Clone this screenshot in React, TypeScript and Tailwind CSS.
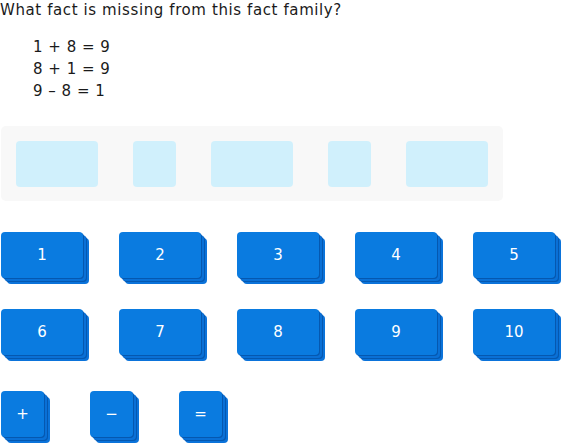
const numbers = ["1", "2", "3", "4", "5", "6", "7", "8", "9", "10"];
const operators = ["+", "\u2212", "="];
const slots = ["wide", "narrow", "wide", "narrow", "wide"];

function Tile({ label, wide }: { label: string; wide: boolean }) {
  return (
    <button
      className={`${wide ? "w-[82px]" : "w-[43px]"} h-[46px] rounded-[4px] bg-[#0a7be0] text-white text-[15px] flex items-center justify-center shadow-[1px_1px_0_#0558b0,3px_3px_0_#0a70d6,4px_4px_0_#0558b0,6px_6px_0_#0b73da]`}
    >
      {label}
    </button>
  );
}

export default function App() {
  return (
    <div className="w-[565px] h-[448px] bg-white text-[#1a1a1a] font-['DejaVu_Sans',Verdana,sans-serif] overflow-hidden">
      <p className="text-[15px] leading-[18px] pt-[1px] tracking-[0.6px]">
        What fact is missing from this fact family?
      </p>

      <div className="pl-[33px] pt-[17px] text-[15px] leading-[22px] tracking-[0.5px]">
        <div>1 + 8 = 9</div>
        <div>8 + 1 = 9</div>
        <div>9 &ndash; 8 = 1</div>
      </div>

      <div className="mt-[24px] ml-[1px] w-[502px] h-[75px] rounded-[5px] bg-[#f8f8f8] p-[15px] flex gap-[35px]">
        {slots.map((s, i) => (
          <div
            key={i}
            className={`${s === "wide" ? "w-[82px]" : "w-[43px]"} h-[46px] rounded-[4px] bg-[#d0f0fc]`}
          />
        ))}
      </div>

      <div className="mt-[31px] pl-[1px] grid grid-cols-[repeat(5,82px)] gap-x-[36px] gap-y-[31px]">
        {numbers.map((n) => (
          <Tile key={n} label={n} wide />
        ))}
      </div>

      <div className="mt-[36px] pl-[1px] flex gap-[46px]">
        {operators.map((o) => (
          <Tile key={o} label={o} wide={false} />
        ))}
      </div>
    </div>
  );
}
